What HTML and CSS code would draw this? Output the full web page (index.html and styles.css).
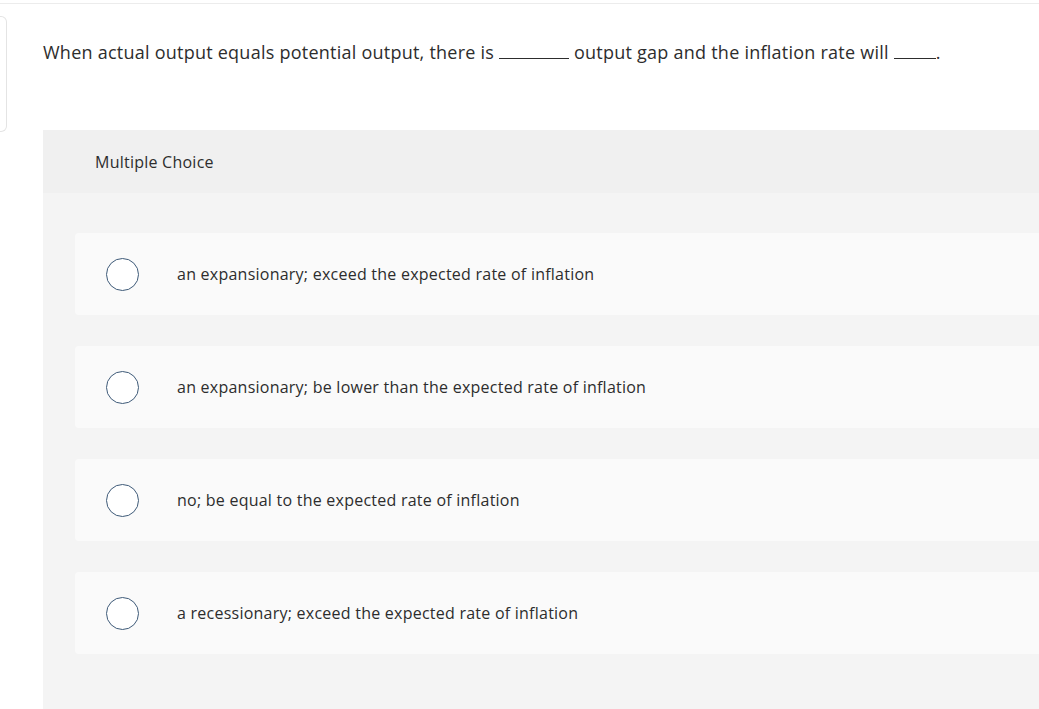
FILE: index.html
```html
<!DOCTYPE html>
<html>
<head>
<meta charset="utf-8">
<link rel="stylesheet" href="styles.css">
</head>
<body>
<div class="topbar"></div>
<div class="layout">
  <div class="stub"></div>
  <main class="main">
    <p class="question">When actual output equals potential output, there is <span class="blank blank-long"></span> output gap and the inflation rate will <span class="blank blank-short"></span>.</p>
    <section class="mc">
      <header class="mc-head">Multiple Choice</header>
      <div class="mc-body">
        <label class="option"><span class="radio"></span><span class="opt-text">an expansionary; exceed the expected rate of inflation</span></label>
        <label class="option"><span class="radio"></span><span class="opt-text">an expansionary; be lower than the expected rate of inflation</span></label>
        <label class="option"><span class="radio"></span><span class="opt-text">no; be equal to the expected rate of inflation</span></label>
        <label class="option"><span class="radio"></span><span class="opt-text">a recessionary; exceed the expected rate of inflation</span></label>
      </div>
    </section>
  </main>
</div>
</body>
</html>
```
FILE: styles.css
```css
html, body {
  margin: 0;
  padding: 0;
  background: #ffffff;
  overflow: hidden;
}
body {
  font-family: "Open Sans", "Liberation Sans", sans-serif;
  color: #2d2d2d;
  letter-spacing: 0.24px;
}
.topbar {
  height: 3px;
  border-bottom: 1px solid #ececec;
}
.layout {
  display: flex;
  align-items: flex-start;
}
.stub {
  flex: 0 0 auto;
  width: 6px;
  height: 114px;
  margin-top: 12px;
  border: 1px solid #e4e4e4;
  border-left: none;
  border-radius: 0 6px 6px 0;
}
.main {
  flex: 1 1 auto;
  margin-left: 36px;
}
.question {
  margin: 36px 0 0 0;
  font-size: 18px;
  line-height: 24px;
  white-space: nowrap;
}
.blank {
  display: inline-block;
  border-bottom: 1px solid #2d2d2d;
  vertical-align: baseline;
  height: 1px;
}
.blank-long { width: 70px; }
.blank-short { width: 42px; }
.mc {
  margin-top: 66px;
  background: #f4f4f4;
  padding-bottom: 60px;
}
.mc-head {
  background: #f0f0f0;
  height: 63px;
  display: flex;
  align-items: center;
  padding-left: 52px;
  font-size: 16px;
}
.mc-body {
  padding: 40px 0 0 32px;
  display: flex;
  flex-direction: column;
  gap: 31px;
}
.option {
  display: flex;
  align-items: center;
  height: 82px;
  background: #fafafa;
  border-radius: 4px 0 0 4px;
}
.radio {
  flex: 0 0 auto;
  width: 31px;
  height: 31px;
  margin-left: 31px;
  border: 1.5px solid #3e5a78;
  border-radius: 50%;
  background: #ffffff;
}
.opt-text {
  margin-left: 38px;
  font-size: 16px;
}
```
